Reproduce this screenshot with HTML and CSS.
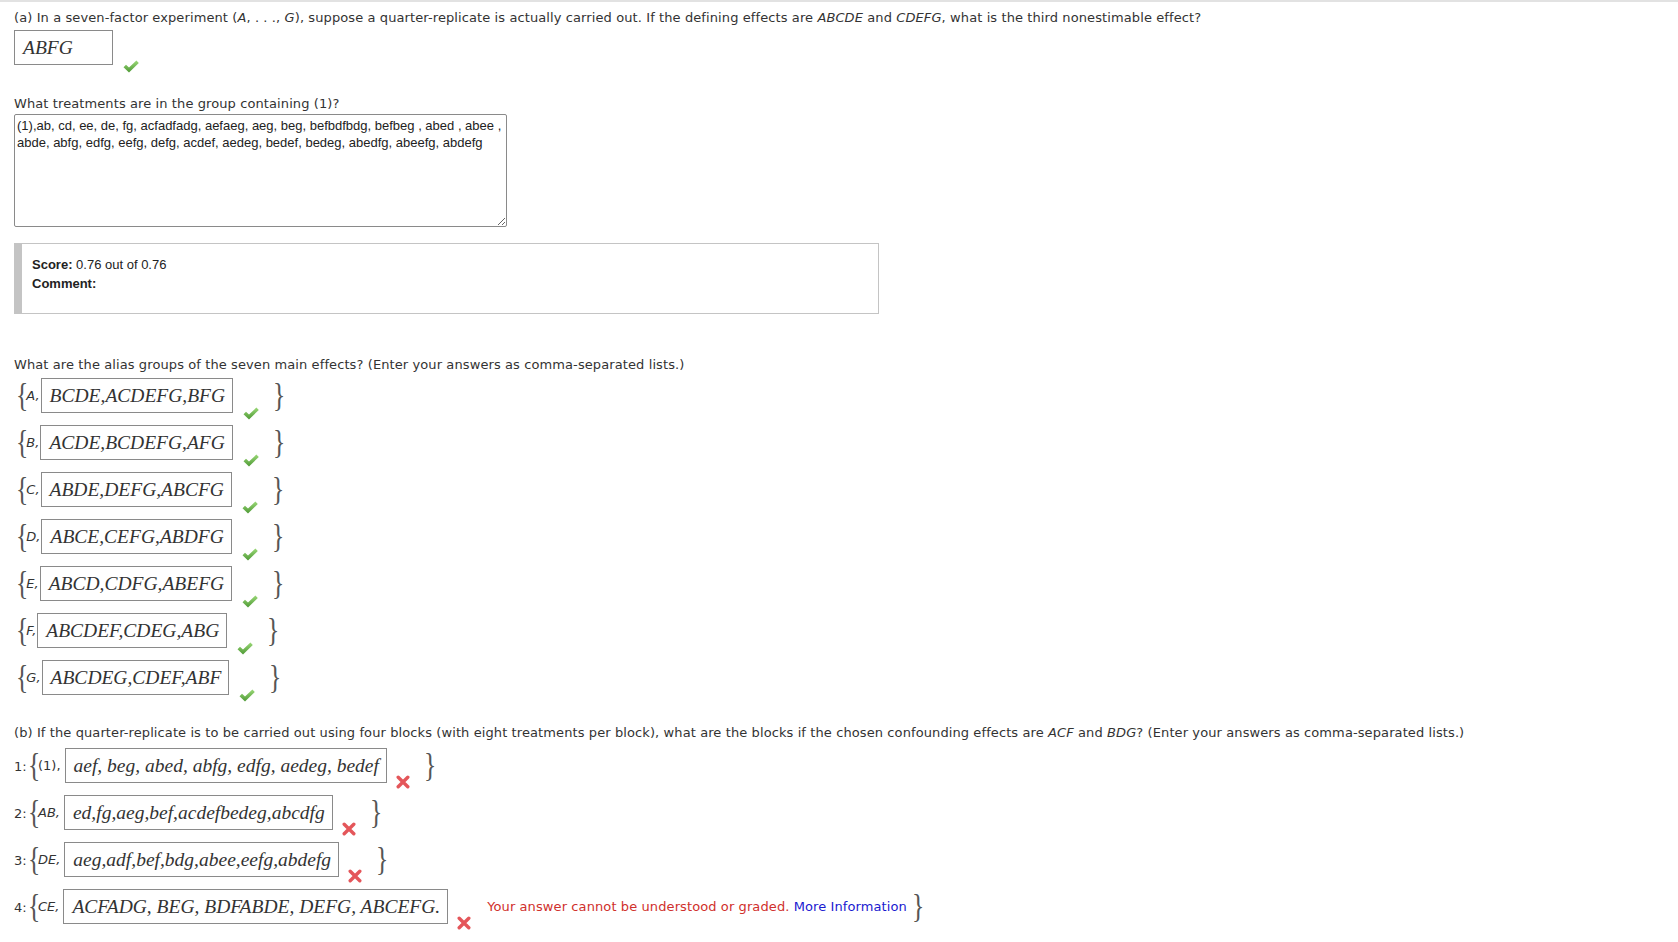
FILE: index.html
```html
<!DOCTYPE html>
<html>
<head>
<meta charset="utf-8">
<title>Quiz</title>
<link rel="stylesheet" href="styles.css">
</head>
<body>
<div class="page">
  <p class="q">(a) In a seven-factor experiment (<i>A</i>, . . ., <i>G</i>), suppose a quarter-replicate is actually carried out. If the defining effects are <i>ABCDE</i> and <i>CDEFG</i>, what is the third nonestimable effect?</p>
  <div class="row first">
    <span class="ans fixed">ABFG</span>
    <span class="mark"><svg viewBox="0 0 16 13" width="16" height="13"><defs><linearGradient id="gk" x1="0" y1="0" x2="0" y2="1"><stop offset="0" stop-color="#9ad877"/><stop offset="1" stop-color="#4f9a36"/></linearGradient></defs><path d="M0.5 7.2 L3 4.8 L6 7.6 L13.4 0.6 L15.8 3 L6 12.4 Z" fill="url(#gk)"/></svg></span>
  </div>

  <p class="q q2">What treatments are in the group containing (1)?</p>
  <textarea class="ta">(1),ab, cd, ee, de, fg, acfadfadg, aefaeg, aeg, beg, befbdfbdg, befbeg , abed , abee ,
abde, abfg, edfg, eefg, defg, acdef, aedeg, bedef, bedeg, abedfg, abeefg, abdefg</textarea>

  <div class="score">
    <div><b>Score:</b> 0.76 out of 0.76</div>
    <div><b>Comment:</b></div>
  </div>

  <p class="q q3">What are the alias groups of the seven main effects? (Enter your answers as comma-separated lists.)</p>
  <div class="group">
    <div class="row"><span class="brace open">{</span><span class="lbl">A,</span><span class="ans">BCDE,ACDEFG,BFG</span><span class="mark"><svg viewBox="0 0 16 13" width="16" height="13"><path d="M0.5 7.2 L3 4.8 L6 7.6 L13.4 0.6 L15.8 3 L6 12.4 Z" fill="url(#gk)"/></svg></span><span class="brace close">}</span></div>
    <div class="row"><span class="brace open">{</span><span class="lbl">B,</span><span class="ans">ACDE,BCDEFG,AFG</span><span class="mark"><svg viewBox="0 0 16 13" width="16" height="13"><path d="M0.5 7.2 L3 4.8 L6 7.6 L13.4 0.6 L15.8 3 L6 12.4 Z" fill="url(#gk)"/></svg></span><span class="brace close">}</span></div>
    <div class="row"><span class="brace open">{</span><span class="lbl">C,</span><span class="ans">ABDE,DEFG,ABCFG</span><span class="mark"><svg viewBox="0 0 16 13" width="16" height="13"><path d="M0.5 7.2 L3 4.8 L6 7.6 L13.4 0.6 L15.8 3 L6 12.4 Z" fill="url(#gk)"/></svg></span><span class="brace close">}</span></div>
    <div class="row"><span class="brace open">{</span><span class="lbl">D,</span><span class="ans">ABCE,CEFG,ABDFG</span><span class="mark"><svg viewBox="0 0 16 13" width="16" height="13"><path d="M0.5 7.2 L3 4.8 L6 7.6 L13.4 0.6 L15.8 3 L6 12.4 Z" fill="url(#gk)"/></svg></span><span class="brace close">}</span></div>
    <div class="row"><span class="brace open">{</span><span class="lbl">E,</span><span class="ans">ABCD,CDFG,ABEFG</span><span class="mark"><svg viewBox="0 0 16 13" width="16" height="13"><path d="M0.5 7.2 L3 4.8 L6 7.6 L13.4 0.6 L15.8 3 L6 12.4 Z" fill="url(#gk)"/></svg></span><span class="brace close">}</span></div>
    <div class="row"><span class="brace open">{</span><span class="lbl">F,</span><span class="ans">ABCDEF,CDEG,ABG</span><span class="mark"><svg viewBox="0 0 16 13" width="16" height="13"><path d="M0.5 7.2 L3 4.8 L6 7.6 L13.4 0.6 L15.8 3 L6 12.4 Z" fill="url(#gk)"/></svg></span><span class="brace close">}</span></div>
    <div class="row"><span class="brace open">{</span><span class="lbl">G,</span><span class="ans">ABCDEG,CDEF,ABF</span><span class="mark"><svg viewBox="0 0 16 13" width="16" height="13"><path d="M0.5 7.2 L3 4.8 L6 7.6 L13.4 0.6 L15.8 3 L6 12.4 Z" fill="url(#gk)"/></svg></span><span class="brace close">}</span></div>
  </div>

  <p class="q q4">(b) If the quarter-replicate is to be carried out using four blocks (with eight treatments per block), what are the blocks if the chosen confounding effects are <i>ACF</i> and <i>BDG</i>? (Enter your answers as comma-separated lists.)</p>
  <div class="group blocks">
    <div class="row"><span class="num">1:</span><span class="brace open">{</span><span class="lbl up">(1),</span><span class="ans">aef, beg, abed, abfg, edfg, aedeg, bedef</span><span class="mark x"><svg viewBox="0 0 14 14" width="14" height="14"><path d="M2.2 2.2 L11.8 11.8 M11.8 2.2 L2.2 11.8" stroke="#e4565a" stroke-width="3.4" stroke-linecap="round"/></svg></span><span class="brace close">}</span></div>
    <div class="row"><span class="num">2:</span><span class="brace open">{</span><span class="lbl">AB,</span><span class="ans">ed,fg,aeg,bef,acdefbedeg,abcdfg</span><span class="mark x"><svg viewBox="0 0 14 14" width="14" height="14"><path d="M2.2 2.2 L11.8 11.8 M11.8 2.2 L2.2 11.8" stroke="#e4565a" stroke-width="3.4" stroke-linecap="round"/></svg></span><span class="brace close">}</span></div>
    <div class="row"><span class="num">3:</span><span class="brace open">{</span><span class="lbl">DE,</span><span class="ans">aeg,adf,bef,bdg,abee,eefg,abdefg</span><span class="mark x"><svg viewBox="0 0 14 14" width="14" height="14"><path d="M2.2 2.2 L11.8 11.8 M11.8 2.2 L2.2 11.8" stroke="#e4565a" stroke-width="3.4" stroke-linecap="round"/></svg></span><span class="brace close">}</span></div>
    <div class="row"><span class="num">4:</span><span class="brace open">{</span><span class="lbl">CE,</span><span class="ans">ACFADG, BEG, BDFABDE, DEFG, ABCEFG.</span><span class="mark x"><svg viewBox="0 0 14 14" width="14" height="14"><path d="M2.2 2.2 L11.8 11.8 M11.8 2.2 L2.2 11.8" stroke="#e4565a" stroke-width="3.4" stroke-linecap="round"/></svg></span><span class="err">Your answer cannot be understood or graded. <a class="more" href="#">More Information</a></span><span class="brace close tight">}</span></div>
  </div>
</div>
</body>
</html>
```

FILE: styles.css
```css
html {
  min-height: 942px;
}

body {
  margin: 0;
  background: #fff;
  color: #333;
  font-family: "DejaVu Sans", Verdana, sans-serif;
}

.page {
  border-top: 2px solid #e2e2e2;
  padding: 7px 14px 24px 14px;
}

.q {
  margin: 0;
  font-size: 13px;
  letter-spacing: 0.1px;
  line-height: 18px;
  color: #333;
  white-space: nowrap;
}

.q i {
  font-style: italic;
}

.q2 {
  margin-top: 30px;
}

.q3 {
  margin-top: 42px;
}

.q4 {
  margin-top: 29px;
}

.row {
  display: flex;
  align-items: flex-start;
  height: 35px;
}

.row.first {
  margin-top: 3px;
}

.group {
  margin-top: 4px;
  display: flex;
  flex-direction: column;
  gap: 12px;
}

.group.blocks {
  margin-top: 6px;
}

.ans {
  box-sizing: border-box;
  height: 35px;
  border: 1px solid #8a8a8a;
  padding: 0 7px 0 8px;
  font-family: "Liberation Serif", "Times New Roman", serif;
  font-style: italic;
  font-size: 19.5px;
  line-height: 33px;
  color: #333;
  white-space: nowrap;
  background: #fff;
}

.ans.fixed {
  width: 99px;
}

.mark {
  display: block;
  margin-left: 10px;
  margin-top: 29px;
  width: 16px;
  height: 13px;
}

.row.first .mark {
  margin-top: 30px;
}

.mark svg {
  display: block;
}

.mark.x {
  margin-left: 9px;
  margin-top: 27px;
  width: 14px;
  height: 14px;
}

.brace {
  display: block;
  font-family: "Liberation Serif", "Times New Roman", serif;
  font-size: 34px;
  line-height: 33px;
  height: 35px;
  color: #555;
  transform: scaleX(0.75);
}

.brace.open {
  margin-right: -4px;
}

.brace.close {
  margin-left: 12px;
}

.brace.close.tight {
  margin-left: 3px;
}

.lbl {
  font-size: 13px;
  line-height: 36px;
  font-style: italic;
  color: #333;
  margin-right: 1px;
}

.blocks .lbl {
  margin-right: 4px;
}

.lbl.up {
  font-style: normal;
  margin-left: 0;
}

.num {
  font-size: 13px;
  line-height: 37px;
  color: #333;
  margin-right: -1px;
}

.ta {
  display: block;
  box-sizing: border-box;
  width: 493px;
  height: 113px;
  margin: 1px 0 0 0;
  padding: 2px;
  border: 1px solid #8a8a8a;
  border-radius: 2px;
  font-family: "Liberation Sans", Arial, sans-serif;
  font-size: 13px;
  line-height: 17px;
  color: #222;
  background: #fff;
}

.score {
  box-sizing: border-box;
  width: 865px;
  margin-top: 16px;
  border: 1px solid #c4c4c4;
  border-left: 8px solid #c4c4c4;
  padding: 11px 10px 20px 10px;
  font-family: "Liberation Sans", Arial, sans-serif;
  font-size: 13px;
  line-height: 19px;
  color: #222;
}

.err {
  margin-left: 16px;
  font-size: 13px;
  letter-spacing: 0.1px;
  line-height: 35px;
  color: #d0302c;
  white-space: nowrap;
}

.more {
  color: #1a1ad0;
  text-decoration: none;
}
```
